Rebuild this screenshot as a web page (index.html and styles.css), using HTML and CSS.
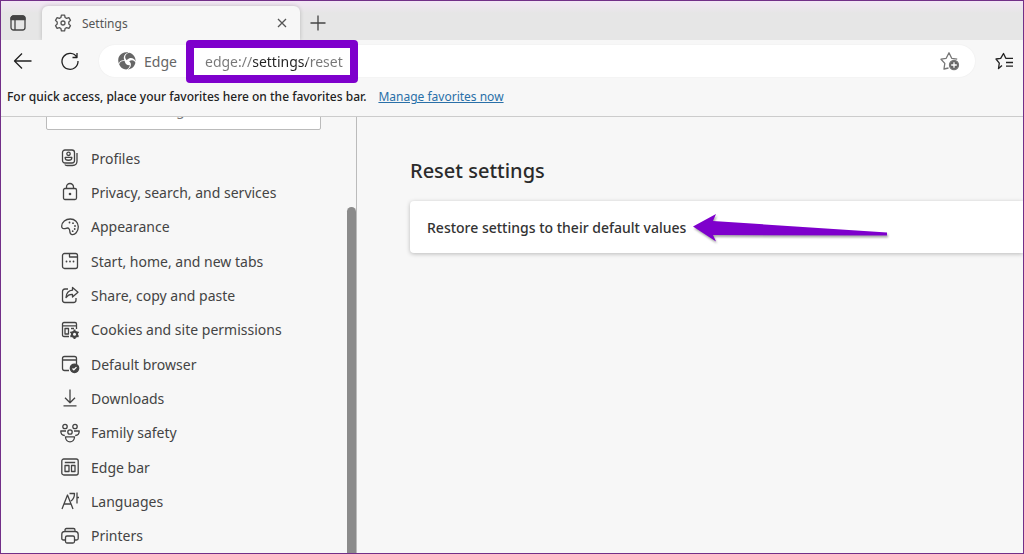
FILE: index.html
```
<!DOCTYPE html>
<html lang="en">
<head>
    <meta charset="UTF-8">
    <meta name="viewport" content="width=device-width, initial-scale=1.0">
    <title>Settings</title>
    <link rel="stylesheet" href="styles.css">
</head>
<body>
    <div class="browser">
        <!-- Tab strip -->
        <div class="tab-strip">
            <button class="icon-btn tab-actions" aria-label="Tab actions">
                <svg width="16" height="16" viewBox="0 0 16 16"><rect x="1" y="1" width="14" height="14" rx="2.5"/><path class="solid" d="M1 4.500V3.500A2.500 2.500 0 0 1 3.500 1h9A2.500 2.500 0 0 1 15 3.500v1z"/><path d="M5 5v10"/></svg>
            </button>
            <div class="tab">
                <svg width="18" height="18" viewBox="0 0 18 18"><path d="M7.400 1.200h3.200l.5 2.300 1.500.9 2.300-.8 1.600 2.800-1.700 1.600v2l1.700 1.600-1.600 2.800-2.300-.8-1.500.9-.5 2.300H7.400l-.5-2.300-1.500-.9-2.300.8-1.600-2.800L3.200 10V8L1.500 6.400l1.600-2.800 2.300.8 1.500-.9z"/><circle cx="9" cy="9" r="2"/></svg>
                <span class="tab-title">Settings</span>
                <button class="icon-btn tab-close" aria-label="Close tab">
                    <svg width="10" height="10" viewBox="0 0 10 10"><path d="M1 1l8 8M9 1L1 9"/></svg>
                </button>
            </div>
            <button class="icon-btn new-tab" aria-label="New tab">
                <svg width="16" height="16" viewBox="0 0 16 16"><path d="M8 .5v15M.5 8h15"/></svg>
            </button>
        </div>

        <!-- Toolbar -->
        <div class="toolbar">
            <button class="icon-btn" aria-label="Back">
                <svg width="18" height="18" viewBox="0 0 18 18"><path d="M17.500 9H.5M8 1.500L.5 9 8 16.500"/></svg>
            </button>
            <button class="icon-btn" aria-label="Refresh">
                <svg width="20" height="20" viewBox="0 0 20 20"><path d="M17 6.500A8 8 0 1 0 18 10M17 2v4.500h-4.500"/></svg>
            </button>
            <div class="address-bar">
                <svg class="edge-logo" width="18" height="18" viewBox="0 0 18 18"><path d="M.8 5C2.500 1.500 6.500-.4 10.500.5 7.800 1.200 6 3 5.800 5.300c-.1 1.200.1 2.200.7 3.200C4 7.800 1.800 9 .8 11.500.1 9.300 0 7 .8 5z"/><path d="M11.500.8c3.800 1.200 6.300 4.600 6.100 8.600-.8-2.700-3.900-4.200-6.600-3-1 .4-1.700 1-2.300 1.800C6.800 6.500 6.700 4.200 8.200 2.500c.9-1 2-1.500 3.300-1.700z"/><path d="M17.400 10.800c-.7 3.700-3.800 6.400-7.700 6.700 2.500-1.200 3.800-3.800 3-6.200-.3-.9-.8-1.600-1.500-2.100 2.300-1.700 5.500-1.200 6.200 1.600z"/><path d="M8.200 17.500C4.800 17.200 2.200 15.200 1.100 12.200c.8-2.500 3.200-3.800 5.700-3 .3 2.700 2.500 4.300 5.100 4-.5 2.300-1.800 3.700-3.700 4.300z"/></svg>
                <label for="url">Edge</label>
                <div class="url-frame">
                    <input type="text" id="url" class="url" value="edge://settings/reset" spellcheck="false">
                </div>
                <button class="icon-btn add-favorite" aria-label="Add this page to favorites">
                    <svg width="20" height="20" viewBox="0 0 20 20"><path d="M8.500 17l-4.500 1 .8-5.600L1 8.200l5.200-.9L9 1.800l2.700 5.500 5.500.9"/><circle class="solid" cx="14" cy="14" r="4.500"/><path class="knockout" d="M14 11.200v5.600M11.200 14h5.600"/></svg>
                </button>
            </div>
            <button class="icon-btn favorites" aria-label="Favorites">
                <svg width="18" height="18" viewBox="0 0 18 18"><path d="M7 13.500L3.500 16.500l.8-5.300L1 7l4.700-.6L8.500 1.500l2.300 4.800H18M11 10.500h7M11 14.200h7"/></svg>
            </button>
        </div>

        <!-- Favorites bar -->
        <div class="favorites-bar">
            <span>For quick access, place your favorites here on the favorites bar.</span>
            <a href="#">Manage favorites now</a>
        </div>

        <div class="page">
            <!-- Settings menu -->
            <aside class="sidebar">
                <div class="search">
                    <svg width="14" height="14" viewBox="0 0 14 14"><circle cx="8.500" cy="5.500" r="4.500"/><path d="M5.300 8.700L1 13"/></svg>
                    <input type="search" placeholder="Search settings" aria-label="Search settings">
                </div>
                <nav class="menu">
                    <a href="#">
                        <svg width="18" height="18" viewBox="0 0 18 18"><rect x="1.500" y="1" width="12" height="13" rx="2.500"/><circle cx="7.500" cy="4.800" r="1.700"/><path d="M4.200 8.300h6.600v.7c0 3-6.600 3-6.600 0zM16 4v8q0 4.500-4.500 4.500H6q-1.500 0-2.200-1"/></svg>
                        <span>Profiles</span>
                    </a>
                    <a href="#">
                        <svg width="18" height="18" viewBox="0 0 18 18"><rect x="2.500" y="5.500" width="13" height="11" rx="1.500"/><path d="M5.500 5.500V4a3.500 3.500 0 0 1 7 0v1.500"/><circle class="solid dot" cx="9" cy="11" r="1.300"/></svg>
                        <span>Privacy, search, and services</span>
                    </a>
                    <a href="#">
                        <svg width="18" height="18" viewBox="0 0 18 18"><path d="M.7 8C1 4 4.500 1 9.300 1c4.500 0 8 3.500 8 7.800 0 5-3.500 8.400-6.300 7.800-3.200-.8-1.600-4-2.700-5.500C6.500 8.500 5 11 3 10.700 1.400 10.500.5 9.500.7 8z"/><path class="dots" d="M8.500 4.500h.01M12 5.200h.01M14 8h.01M13.700 11h.01M11.700 13.200h.01"/></svg>
                        <span>Appearance</span>
                    </a>
                    <a href="#">
                        <svg width="18" height="18" viewBox="0 0 18 18"><rect x="1.500" y="1.500" width="15" height="15" rx="2"/><path d="M8.500 1.500V5h8"/><path class="dots" d="M5.500 9.500h.01M9 9.500h.01M12.500 9.500h.01"/></svg>
                        <span>Start, home, and new tabs</span>
                    </a>
                    <a href="#">
                        <svg width="18" height="18" viewBox="0 0 18 18"><path d="M7 3H4Q1.500 3 1.500 5.500v8.500Q1.500 16.500 4 16.500h8.500q2.500 0 2.500-2.500v-2M11.500 1.500L17 6.200 11.500 11V8.300Q7.500 8 5 11.500 5.500 4.800 11.500 4.200z"/></svg>
                        <span>Share, copy and paste</span>
                    </a>
                    <a href="#">
                        <svg width="18" height="18" viewBox="0 0 18 18"><path d="M8 15.500H3q-1.500 0-1.500-1.500V3Q1.500 1.500 3 1.500h11q1.500 0 1.500 1.500v5M1.500 4.800h14M4 7.500h3.500v5.500H4zM10 7.500h3"/><circle class="solid" cx="13.500" cy="13.300" r="3"/><path class="teeth" d="M13.500 8.600v9.400M9.400 11l8.200 4.600M17.600 11l-8.200 4.600"/><circle class="hole" cx="13.500" cy="13.300" r="1.500"/></svg>
                        <span>Cookies and site permissions</span>
                    </a>
                    <a href="#">
                        <svg width="18" height="18" viewBox="0 0 18 18"><path d="M8 15.500H3.500q-2 0-2-2v-10q0-2 2-2h10q2 0 2 2V9M1.500 5h14"/><circle class="solid" cx="13.500" cy="13.300" r="4.200"/><path class="knockout" d="M11.500 13.500l1.300 1.300 2.700-2.700"/></svg>
                        <span>Default browser</span>
                    </a>
                    <a href="#">
                        <svg width="18" height="18" viewBox="0 0 18 18"><path d="M9 .5v13M4 8.700l5 5 5-5M2.500 16.800h13"/></svg>
                        <span>Downloads</span>
                    </a>
                    <a href="#">
                        <svg width="18" height="18" viewBox="1 1 18 18"><circle cx="5" cy="3.500" r="2.200"/><circle cx="15" cy="3.500" r="2.200"/><circle cx="10" cy="9" r="2.200"/><path d="M6 8H.8c0 3 1.500 4.500 4 4.500M14 8h5.200c0 3-1.500 4.500-4 4.500M5.500 13.800h9c0 6.800-9 6.800-9 0z"/></svg>
                        <span>Family safety</span>
                    </a>
                    <a href="#">
                        <svg width="18" height="18" viewBox="0 0 18 18"><rect x=".8" y="1" width="16.400" height="16" rx="2"/><path d="M3.800 4.500h10.400M4 7.500h4v6H4zM10.500 7.500h3.500v6h-3.500z"/></svg>
                        <span>Edge bar</span>
                    </a>
                    <a href="#">
                        <svg width="18" height="18" viewBox="0 0 18 18"><path d="M1 17L6.500 3 12 17M3 12h7M8.500 1.500h5q0 5-3.500 7.500M16 .5v11M16 5.500h2"/></svg>
                        <span>Languages</span>
                    </a>
                    <a href="#">
                        <svg width="18" height="18" viewBox="0 0 18 18"><path d="M4 4.500V3q0-1.500 1.500-1.500h7Q14 1.500 14 3v1.500M4.500 13H2.500Q.8 13 .8 11.500V7.500q0-3 3-3h10.400q3 0 3 3v4q0 1.500-1.700 1.500h-2"/><rect x="4.500" y="9" width="9" height="7" rx="1.500"/></svg>
                        <span>Printers</span>
                    </a>
                </nav>
                <div class="scroll-thumb"></div>
            </aside>

            <!-- Reset settings -->
            <main class="content">
                <h1>Reset settings</h1>
                <button class="card">
                    <span>Restore settings to their default values</span>
                    <svg class="arrow" width="200" height="32" viewBox="0 0 200 32"><path d="M2 14.500L25 2l-3 7 174 11.500v3L22 23l3 6.500z"/></svg>
                </button>
            </main>
        </div>
    </div>
</body>
</html>
```
FILE: styles.css
```
* {
    box-sizing: border-box;
}

body {
    margin: 0;
    font-family: 'Noto Sans', 'Open Sans', sans-serif;
    font-size: 14px;
    color: #333;
    background: #f7f7f7;
}

button {
    font-family: inherit;
    border: none;
    background: none;
    padding: 0;
    cursor: pointer;
}

svg {
    flex: none;
    fill: none;
    stroke: #444;
    stroke-width: 1.3;
    stroke-linejoin: round;
    overflow: visible;
}

svg .solid {
    fill: #444;
}

svg .dot {
    stroke: none;
}

svg .dots {
    stroke-width: 1.8;
    stroke-linecap: round;
}

svg .knockout {
    stroke: #fff;
}

svg .teeth {
    stroke-width: 2;
}

svg .hole {
    fill: #f7f7f7;
    stroke: none;
}

.browser {
    display: flex;
    flex-direction: column;
    height: 100vh;
    border: 1px solid #722f88;
    overflow: hidden;
}

.icon-btn {
    display: flex;
    align-items: center;
    justify-content: center;
    flex: none;
}

/* Tab strip */
.tab-strip {
    display: flex;
    align-items: flex-end;
    height: 39px;
    flex: none;
    background: linear-gradient(#f3e6f5, #e6e6e6 12px);
}

.tab-actions {
    width: 34px;
    height: 34px;
    margin-right: 7px;
}

.tab {
    display: flex;
    align-items: center;
    width: 258px;
    height: 34px;
    padding: 0 13px 0 12px;
    border-radius: 6px 6px 0 0;
    background: #f7f7f7;
    box-shadow: 0 0 4px rgba(0, 0, 0, 0.2);
}

.tab svg {
    stroke: #555;
}

.tab-title {
    flex: 1;
    margin-left: 10px;
    font-size: 12px;
    color: #555;
}

.new-tab {
    width: 36px;
    height: 34px;
}

/* Toolbar */
.toolbar {
    display: flex;
    align-items: center;
    height: 42px;
    flex: none;
    padding: 0 9px 0 12px;
    background: #f7f7f7;
    position: relative;
}

.toolbar > .icon-btn {
    width: 20px;
    margin-right: 27px;
}

.toolbar > .icon-btn svg {
    stroke: #222;
}

.toolbar > .favorites {
    margin: 0 0 0 19px;
}

.address-bar {
    display: flex;
    align-items: center;
    flex: 1;
    height: 32px;
    padding: 0 15px 0 19px;
    margin-left: -8px;
    border-radius: 16px;
    background: #fff;
    box-shadow: 0 0 2px rgba(0, 0, 0, 0.06);
}

.address-bar label {
    width: 42px;
    margin-left: 8px;
    color: #666;
}

.address-bar .edge-logo {
    fill: #666;
    stroke: none;
}

.url-frame {
    width: 172px;
    height: 43px;
    border: 8px solid #7e00cc;
    border-radius: 4px;
}

.url {
    width: 100%;
    height: 27px;
    padding: 0 0 0 11px;
    border: none;
    outline: none;
    font: inherit;
    /* the host part is darker than the rest of the address */
    color: transparent;
    background: linear-gradient(90deg, #777 59px, #222 59px, #222 113px, #777 113px);
    -webkit-background-clip: text;
    background-clip: text;
}

.add-favorite {
    margin-left: auto;
}

.add-favorite svg {
    stroke: #777;
}

.add-favorite .solid {
    fill: #666;
}

/* Favorites bar */
.favorites-bar {
    display: flex;
    gap: 12px;
    height: 35px;
    flex: none;
    padding: 5px 6px 0;
    border-bottom: 1px solid #ccc;
    font-size: 12px;
    line-height: 20px;
    font-weight: 500;
    color: #222;
}

.favorites-bar a {
    color: #2a70a8;
    font-weight: 400;
}

/* Page */
.page {
    display: flex;
    flex: 1;
    min-height: 0;
}

.sidebar {
    position: relative;
    display: flex;
    flex-direction: column;
    width: 356px;
    flex: none;
    overflow: hidden;
    border-right: 1px solid #bbb;
}

/* scrolled mostly out of view */
.search {
    display: flex;
    align-items: center;
    gap: 12px;
    width: 275px;
    height: 34px;
    flex: none;
    margin: -21px 0 11px 45px;
    padding: 0 16px 8px;
    border: 1px solid #bbb;
    border-radius: 2px;
    background: #fff;
}

.search input {
    width: 100%;
    border: none;
    background: none;
    font: inherit;
}

.menu {
    display: flex;
    flex-direction: column;
    flex: 1;
}

.menu a {
    display: flex;
    align-items: center;
    flex: 1;
    min-height: 34px;
    padding-left: 60px;
    color: #444;
    text-decoration: none;
}

.menu span {
    margin-left: 12px;
}

.scroll-thumb {
    position: absolute;
    top: 90px;
    right: 0;
    bottom: 0;
    width: 9px;
    border-radius: 5px 5px 0 0;
    background: #8b8b8b;
}

.content {
    flex: 1;
    min-width: 0;
    padding: 40px 0 0 53px;
}

h1 {
    margin: 0 0 16px;
    font-size: 20px;
    line-height: 28px;
    font-weight: 500;
    color: #2b2b2b;
}

.card {
    position: relative;
    display: flex;
    align-items: center;
    width: 100%;
    height: 52px;
    padding-left: 17px;
    border-radius: 4px 0 0 4px;
    background: #fff;
    box-shadow: 0 1px 4px rgba(0, 0, 0, 0.25);
    font-size: 14px;
    font-weight: 500;
    color: #333;
}

/* Callout arrow on top of the card */
.arrow {
    position: absolute;
    left: 281px;
    top: 11px;
    fill: #7e00cc;
    stroke: none;
    filter: drop-shadow(1px 2px 1px rgba(0, 0, 0, 0.35));
}
```
